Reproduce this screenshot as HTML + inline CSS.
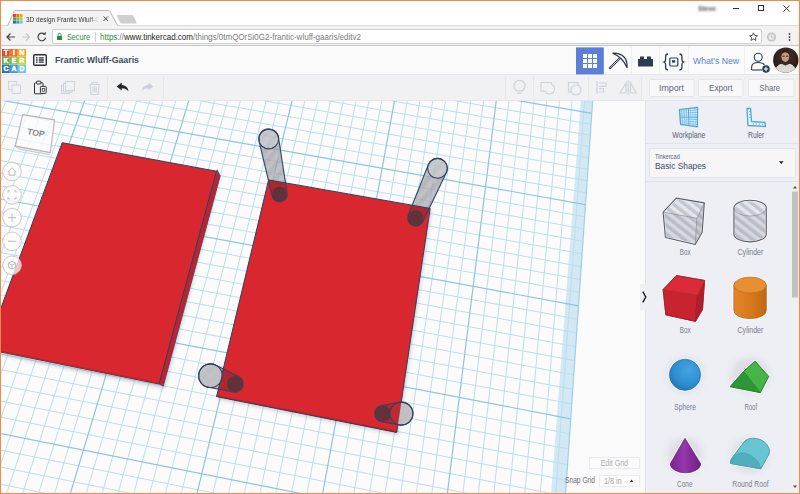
<!DOCTYPE html>
<html><head><meta charset="utf-8"><title>3D design Frantic Wluff-Gaaris</title>
<style>
*{box-sizing:border-box}
html,body{margin:0;padding:0}
body{width:800px;height:494px;position:relative;overflow:hidden;background:#fff;font-family:"Liberation Sans",sans-serif;color:#3d4a5c}
.abs{position:absolute}
#frame{position:absolute;left:0;top:0;width:800px;height:494px;border:1px solid #f28a4a;z-index:50;pointer-events:none}
/* chrome */
#titlebar{left:0;top:0;width:800px;height:27px;background:#fff}
#addr{left:0;top:26px;width:800px;height:20px;background:#f2f2f2;border-bottom:1px solid #c6c6c6}
#url{left:52px;top:29px;width:710px;height:15px;background:#fff;border:1px solid #d0d0d0;border-radius:2px}
.urltxt{font-size:9px;top:31px;white-space:nowrap;line-height:11px}
/* header */
#hdr{left:0;top:46px;width:800px;height:29px;background:#fafafb;border-bottom:1px solid #e6e7ec}
#tb{left:0;top:75px;width:800px;height:26px;background:#f1f1f4;border-bottom:1px solid #e4e5ea}
.sep{position:absolute;width:1px;background:#e6e7ec}
.btn{position:absolute;top:79px;height:18px;border:1px solid #e3e4ea;background:#f7f7fa;border-radius:1px;font-size:10.5px;line-height:16px;text-align:center;color:#5a6476}
/* sidebar */
#side{left:645px;top:101px;width:155px;height:393px;background:#eeeff4;border-left:1px solid #e0e1e8}
.lbl{position:absolute;font-size:9px;color:#6b7385;text-align:center;width:60px;line-height:10px}
</style></head><body>
<div id="titlebar" class="abs"></div>
<svg class="abs" style="left:0;top:0" width="800" height="28" viewBox="0 0 800 28">
 <path d="M1,26 L7.5,26 L14,11.5 Q14.5,10.5 16,10.5 L108,10.5 Q109.5,10.5 110,11.5 L118,26 L800,26 L800,28 L1,28 Z" fill="#f2f2f2"/>
 <path d="M1,26 L7.5,26 L14,11.5 Q14.5,10.5 16,10.5 L108,10.5 Q109.5,10.5 110,11.5 L118,26 L800,26" fill="none" stroke="#b9b9b9" stroke-width="1"/>
 <path d="M117.5,15 L132,15 Q133,15 133.5,16 L136.5,22.5 Q137,23.5 136,23.5 L121.5,23.5 Q120.5,23.5 120,22.5 L117,16 Q116.5,15 117.5,15Z" fill="#cfcfcf"/>
 <!-- favicon -->
 <g>
  <rect x="13" y="14" width="3" height="3" fill="#e8452f"/><rect x="16.3" y="14" width="3" height="3" fill="#f37321"/><rect x="19.6" y="14" width="3" height="3" fill="#f9a51a"/>
  <rect x="13" y="17.3" width="3" height="3" fill="#58a942"/><rect x="16.3" y="17.3" width="3" height="3" fill="#7dbb42"/><rect x="19.6" y="17.3" width="3" height="3" fill="#b5cf35"/>
  <rect x="13" y="20.6" width="3" height="3" fill="#1c75bc"/><rect x="16.3" y="20.6" width="3" height="3" fill="#3b9ad8"/><rect x="19.6" y="20.6" width="3" height="3" fill="#6dc3ee"/>
 </g>
 <!-- tab close -->
 <path d="M103.5,16.5 L108,21 M108,16.5 L103.5,21" stroke="#444" stroke-width="1" fill="none"/>
 <!-- window controls -->
 <path d="M733,8.5 L739,8.5" stroke="#333" stroke-width="1"/>
 <rect x="758.5" y="5.5" width="5" height="5" fill="none" stroke="#333" stroke-width="1"/>
 <path d="M783.5,5.5 L789.5,11.5 M789.5,5.5 L783.5,11.5" stroke="#333" stroke-width="1"/>
</svg>
<div id="addr" class="abs"></div>
<div id="url" class="abs"></div>
<svg class="abs" style="left:0;top:27px" width="800" height="20" viewBox="0 27 800 20">
 <!-- back -->
 <path d="M7,37 L15,37 M10.5,33.5 L7,37 L10.5,40.5" stroke="#444" stroke-width="1.2" fill="none"/>
 <path d="M22,37 L29.5,37 M26,33.5 L29.5,37 L26,40.5" stroke="#c8c8c8" stroke-width="1.2" fill="none"/>
 <path d="M44.5,34.2 A3.8,3.8 0 1 0 45.6,37.6" stroke="#444" stroke-width="1.2" fill="none"/><path d="M42.6,34.8 L45.8,34.8 L45.8,31.8 Z" fill="#444"/>
 <!-- lock -->
 <rect x="57" y="36" width="5" height="4" rx="0.5" fill="#2a8a3e"/><path d="M58,36 v-1.2 a1.5,1.5 0 0 1 3,0 v1.2" stroke="#2a8a3e" stroke-width="0.9" fill="none"/>
 <path d="M95.5,32 v10" stroke="#d0d0d0" stroke-width="1"/>
 <!-- star -->
 <path d="M753.5,32.8 l1.2,2.6 2.8,0.3 -2.1,1.9 0.6,2.8 -2.5,-1.4 -2.5,1.4 0.6,-2.8 -2.1,-1.9 2.8,-0.3z" fill="none" stroke="#444" stroke-width="0.9"/>
 <circle cx="771.5" cy="37" r="4.6" fill="#c4c4c4"/><circle cx="771.5" cy="37" r="2.9" fill="#e9e9e9"/><path d="M771.5,34.4 v2.8 h2.2" stroke="#c4c4c4" stroke-width="0.9" fill="none"/>
 <circle cx="789.5" cy="34" r="0.9" fill="#444"/><circle cx="789.5" cy="37" r="0.9" fill="#444"/><circle cx="789.5" cy="40" r="0.9" fill="#444"/>
</svg>
<!-- tinkercad header -->
<div id="hdr" class="abs"></div>
<div id="tb" class="abs"></div>
<svg class="abs" style="left:0;top:47px" width="800" height="56" viewBox="0 47 800 56" font-family="Liberation Sans, sans-serif">
 <!-- logo -->
 <g font-size="6.8" font-weight="bold" fill="#fff" text-anchor="middle" stroke="#fff" stroke-width="0.5" paint-order="stroke">
  <rect x="2" y="49" width="8" height="8" fill="#e8452f"/><rect x="10" y="49" width="8" height="8" fill="#f37321"/><rect x="18" y="49" width="8" height="8" fill="#f9a51a"/>
  <rect x="2" y="57" width="8" height="8" fill="#58a942"/><rect x="10" y="57" width="8" height="8" fill="#7dbb42"/><rect x="18" y="57" width="8" height="8" fill="#b5cf35"/>
  <rect x="2" y="65" width="8" height="8" fill="#1c75bc"/><rect x="10" y="65" width="8" height="8" fill="#3b9ad8"/><rect x="18" y="65" width="8" height="8" fill="#6dc3ee"/>
  <text x="6" y="55.4">T</text><text x="14" y="55.4">I</text><text x="22" y="55.4">N</text>
  <text x="6" y="63.4">K</text><text x="14" y="63.4">E</text><text x="22" y="63.4">R</text>
  <text x="6" y="71.4">C</text><text x="14" y="71.4">A</text><text x="22" y="71.4">D</text>
 </g>
 <!-- list icon -->
 <rect x="33.7" y="54.7" width="12.6" height="10.6" rx="1.2" fill="none" stroke="#2b2f38" stroke-width="1.4"/>
 <path d="M36,57.8 h1.6 M36,60 h1.6 M36,62.2 h1.6" stroke="#2b2f38" stroke-width="1.3"/>
 <path d="M38.8,57.8 h5 M38.8,60 h5 M38.8,62.2 h5" stroke="#2b2f38" stroke-width="1.3"/>
 <!-- right header -->
 <rect x="576" y="47.4" width="27.8" height="27" fill="#5b7fd6"/>
 <g fill="#fff"><rect x="583" y="54" width="4" height="4"/><rect x="588" y="54" width="4" height="4"/><rect x="593" y="54" width="4" height="4"/>
 <rect x="583" y="59" width="4" height="4"/><rect x="588" y="59" width="4" height="4"/><rect x="593" y="59" width="4" height="4"/>
 <rect x="583" y="64" width="4" height="4"/><rect x="588" y="64" width="4" height="4"/><rect x="593" y="64" width="4" height="4"/></g>
 <!-- pickaxe -->
 <path d="M610,68 L621,57" stroke="#2b3242" stroke-width="2.2" stroke-linecap="round"/>
 <path d="M610.3,67.7 L620.5,57.5" stroke="#fff" stroke-width="0.7"/>
 <path d="M613,53.2 Q620,53 624,57 Q627.5,60.5 627,67.5 Q624.5,62 621.5,59 Q618.5,56 613,53.2Z" fill="#fff" stroke="#2b3242" stroke-width="1.2" stroke-linejoin="round"/>
 <!-- lego -->
 <path d="M638,59 h2 v-2.5 h4 v2.5 h3 v-2.5 h4 v2.5 h2 v7.5 h-15z" fill="#2e3b52"/>
 <!-- code block -->
 <path d="M668,54 q-2.4,0 -2.4,2.4 v3 q0,2 -1.8,2.6 q1.8,0.6 1.8,2.6 v3 q0,2.4 2.4,2.4" fill="none" stroke="#2e3b52" stroke-width="1.3"/>
 <path d="M679.5,54 q2.4,0 2.4,2.4 v3 q0,2 1.8,2.6 q-1.8,0.6 -1.8,2.6 v3 q0,2.4 -2.4,2.4" fill="none" stroke="#2e3b52" stroke-width="1.3"/>
 <rect x="669.8" y="58" width="8" height="8" rx="1" fill="none" stroke="#2e3b52" stroke-width="1.2"/><rect x="672" y="60.2" width="3.2" height="2.4" fill="#2e3b52"/>
 <text x="693" y="63.6" font-size="9.2" fill="#5b7fd6" textLength="46" lengthAdjust="spacingAndGlyphs">What's New</text>
 <!-- user plus -->
 <circle cx="758.2" cy="57.2" r="4" fill="none" stroke="#2e3b52" stroke-width="1.1"/>
 <path d="M751.6,70 v-2.5 q0,-5 6.600,-5 q4.600,0 6.200,2.400" fill="none" stroke="#2e3b52" stroke-width="1.1"/><path d="M752,70 h10" stroke="#2e3b52" stroke-width="1.1"/>
 <circle cx="766" cy="69" r="3.8" fill="#2e3b52"/><path d="M763.8,69 h4.4 M766,66.8 v4.4" stroke="#fff" stroke-width="1.1"/>
 <!-- avatar -->
 <defs><clipPath id="av"><circle cx="785.8" cy="60.1" r="12.7"/></clipPath>
 <radialGradient id="avg" cx="0.5" cy="0.35" r="0.75"><stop offset="0" stop-color="#47322a"/><stop offset="0.6" stop-color="#2a1f1b"/><stop offset="1" stop-color="#17110f"/></radialGradient></defs>
 <g clip-path="url(#av)"><rect x="772" y="46" width="28" height="28" fill="url(#avg)"/>
  <path d="M774,76 q0.5,-10.5 7.5,-12.2 l4,1.6 l4,-1.6 q7,1.700 7.500,12.2z" fill="#dcd8d4"/>
  <ellipse cx="785.3" cy="56.600" rx="3.900" ry="5.300" fill="#c79a84"/>
  <path d="M781,55 q0.6,-5.600 4.300,-5.600 q3.700,0 4.300,5.600 q-1.800,-2.800 -4.300,-2.800 q-2.500,0 -4.300,2.800z" fill="#2e211b"/>
  <path d="M782.300,56.200 h2.400 M786,56.200 h2.400" stroke="#2e211b" stroke-width="0.900"/>
  <path d="M783.300,63.200 l2.200,0.900 l2.200,-0.900 v1.800 l-2.200,-0.900 l-2.200,0.900z" fill="#4a4a50"/>
 </g>
 <path d="M631.5,47 v28 M659.5,47 v28 M688.5,47 v28 M744.5,47 v28" stroke="#eceef3" stroke-width="1"/>
 <!-- toolbar icons left -->
 <g fill="none" stroke="#d0d4de" stroke-width="1.1">
  <rect x="8.5" y="81.5" width="8" height="8"/><rect x="12" y="85" width="8.5" height="8.5" fill="#f1f1f4"/>
  <rect x="61.5" y="85.5" width="8" height="8" /><rect x="63.5" y="83.5" width="8.5" height="8.5" fill="#f1f1f4"/><rect x="65.5" y="81.5" width="9" height="9" fill="#f1f1f4"/>
  <path d="M89,84.5 h11 M92,84.5 v-2 h5 v2 M90,84.5 l0.8,10 h7.4 l0.8,-10 M93,86.5 v6 M94.6,86.5 v6 M96.2,86.5 v6"/>
 </g>
 <g fill="none" stroke="#2b2f38" stroke-width="1">
  <rect x="34.5" y="82.8" width="8.5" height="11" rx="0.8"/><rect x="36.6" y="81.2" width="4.2" height="2.8" rx="0.6" fill="#f1f1f4"/><rect x="40.4" y="86.4" width="5.8" height="7" rx="0.8" fill="#f1f1f4"/><rect x="42.2" y="88.6" width="2.2" height="2.6" stroke-width="0.7"/>
 </g>
 <path d="M107.5,76 v25 M163.5,76 v25 M505.5,76 v25 M533.5,76 v26 M588.5,76 v26 M641.5,76 v26" stroke="#e6e7ec" stroke-width="1"/>
 <!-- undo / redo -->
 <path d="M116.6,86.5 L121.8,82.6 L121.8,85 Q127.5,85.2 128.6,91.2 Q126,88.2 121.8,88.2 L121.8,90.4 Z" fill="#23272f"/>
 <path d="M153.6,86.5 L148.4,82.6 L148.4,85 Q142.7,85.2 141.6,91.2 Q144.2,88.2 148.4,88.2 L148.4,90.4 Z" fill="#ccd1dc"/>
 <!-- toolbar icons right -->
 <g fill="none" stroke="#cfd3dd" stroke-width="1.2">
  <path d="M516.7,91 q-2.8,-2.4 -2.8,-5 a5.6,5.6 0 0 1 11.2,0 q0,2.6 -2.8,5 z M517.2,93.2 h4.6"/>
  <path d="M541,82.5 H551.5 V84.3 A5,5 0 1 1 545.2,91.2 H541 Z"/>
  <rect x="568.5" y="82.5" width="9.5" height="9.5"/><circle cx="576" cy="90" r="5" fill="#f1f1f4"/>
  <path d="M597,81 v13 M599,83 h7 v3.4 h-7 M599,88.6 h4.6 v3.4 h-4.6"/>
  <path d="M628.2,80.5 v14.5 M626,83 v10 h-6z M630.4,83 v10 h6z"/>
 </g>
</svg>
<svg class="abs" style="left:0;top:0" width="800" height="102" viewBox="0 0 800 102" font-family="Liberation Sans, sans-serif">
 <defs><linearGradient id="tf" x1="0" x2="1"><stop offset="0.86" stop-color="#fff"/><stop offset="1" stop-color="#000"/></linearGradient>
 <mask id="tm"><rect x="24" y="10" width="75" height="16" fill="url(#tf)"/></mask>
 <filter id="bl"><feGaussianBlur stdDeviation="0.8"/></filter></defs>
 <g mask="url(#tm)"><text x="26" y="21.6" font-size="7.6" fill="#333" textLength="78" lengthAdjust="spacingAndGlyphs">3D design Frantic Wluff-Ga</text></g>
 <text x="698" y="11" font-size="7.4" font-weight="bold" fill="#555" textLength="18" lengthAdjust="spacingAndGlyphs" filter="url(#bl)">Steve</text>
 <text x="67" y="40" font-size="8.2" fill="#2a8a3e" textLength="23" lengthAdjust="spacingAndGlyphs">Secure</text>
 <text x="100" y="40" font-size="8.2" fill="#7a7a7a" textLength="261" lengthAdjust="spacingAndGlyphs"><tspan fill="#2a8a3e">https</tspan>://<tspan fill="#222">www.tinkercad.com</tspan>/things/0tmQOrSi0G2-frantic-wluff-gaaris/editv2</text>
 <text x="55" y="63.2" font-size="9.6" font-weight="bold" fill="#414d61" textLength="84" lengthAdjust="spacingAndGlyphs">Frantic Wluff-Gaaris</text>
 <g fill="#f8f8fa" stroke="#e4e5eb" stroke-width="1">
  <rect x="649.5" y="79.5" width="44.5" height="17" rx="1"/><rect x="698.5" y="79.5" width="44.5" height="17" rx="1"/><rect x="748.5" y="79.5" width="45.5" height="17" rx="1"/>
 </g>
 <g font-size="8.8" fill="#5d6778">
  <text x="659" y="91" textLength="25" lengthAdjust="spacingAndGlyphs">Import</text>
  <text x="709" y="91" textLength="23.4" lengthAdjust="spacingAndGlyphs">Export</text>
  <text x="759.6" y="91" textLength="20.4" lengthAdjust="spacingAndGlyphs">Share</text>
 </g>
</svg>

<svg id="cv" width="800" height="494" viewBox="0 0 800 494" style="position:absolute;left:0;top:0">
<defs><clipPath id="cc"><rect x="1" y="101" width="644" height="392"/></clipPath><pattern id="st" width="9" height="9" patternUnits="userSpaceOnUse" patternTransform="rotate(40)"><rect width="9" height="9" fill="#a9abb0"/><rect width="4.5" height="9" fill="#9b9da3"/></pattern></defs>
<g clip-path="url(#cc)">
<rect x="0" y="100" width="646" height="394" fill="#fafafa"/>
<polygon points="-58.0,-40.1 594.7,71.1 546.6,768.5 -355.1,575.8" fill="#fbfbfc"/>
<polygon points="583.2,69.2 594.7,71.1 546.6,768.5 530.6,765.0" fill="#d2e8f4"/>
<path d="M-46.7,-38.2 L-339.8,579.1 M-35.4,-36.2 L-324.4,582.3 M-24.1,-34.3 L-309.0,585.6 M-12.8,-32.4 L-293.6,588.9 M-1.5,-30.5 L-278.2,592.2 M9.9,-28.5 L-262.7,595.5 M21.3,-26.6 L-247.2,598.8 M44.0,-22.7 L-216.1,605.5 M55.5,-20.8 L-200.5,608.8 M66.9,-18.8 L-184.8,612.2 M78.3,-16.9 L-169.2,615.5 M89.8,-14.9 L-153.5,618.9 M101.3,-12.9 L-137.7,622.2 M112.8,-11.0 L-122.0,625.6 M135.8,-7.1 L-90.4,632.4 M147.4,-5.1 L-74.5,635.7 M159.0,-3.1 L-58.6,639.1 M170.5,-1.1 L-42.7,642.5 M182.1,0.8 L-26.7,645.9 M193.8,2.8 L-10.8,649.4 M205.4,4.8 L5.3,652.8 M228.7,8.8 L37.4,659.7 M240.4,10.8 L53.5,663.1 M252.1,12.8 L69.7,666.5 M263.8,14.7 L85.8,670.0 M275.6,16.7 L102.1,673.5 M287.3,18.8 L118.3,676.9 M299.1,20.8 L134.6,680.4 M322.7,24.8 L167.3,687.4 M334.5,26.8 L183.6,690.9 M346.3,28.8 L200.1,694.4 M358.2,30.8 L216.5,697.9 M370.1,32.9 L233.0,701.4 M382.0,34.9 L249.5,705.0 M393.9,36.9 L266.1,708.5 M417.7,41.0 L299.3,715.6 M429.7,43.0 L315.9,719.2 M441.7,45.1 L332.6,722.7 M453.7,47.1 L349.3,726.3 M465.7,49.2 L366.1,729.9 M477.7,51.2 L382.9,733.5 M489.8,53.3 L399.7,737.1 M514.0,57.4 L433.5,744.3 M526.1,59.4 L450.4,747.9 M538.2,61.5 L467.4,751.5 M550.3,63.6 L484.4,755.2 M562.5,65.6 L501.4,758.8 M574.7,67.7 L518.5,762.5 M586.9,69.8 L535.6,766.1 M-58.0,-40.1 L594.7,71.1 M-62.5,-30.8 L594.0,81.5 M-67.0,-21.4 L593.2,92.0 M-71.6,-11.8 L592.5,102.6 M-81.0,7.6 L591.0,124.3 M-85.7,17.5 L590.2,135.4 M-90.6,27.5 L589.5,146.5 M-95.4,37.6 L588.7,157.8 M-100.4,47.8 L587.9,169.3 M-105.4,58.2 L587.1,180.9 M-110.5,68.7 L586.3,192.7 M-120.8,90.1 L584.6,216.7 M-126.0,101.0 L583.8,228.9 M-131.4,112.0 L582.9,241.3 M-136.8,123.2 L582.1,253.8 M-142.2,134.5 L581.2,266.6 M-147.7,146.0 L580.3,279.5 M-153.4,157.6 L579.4,292.5 M-164.8,181.3 L577.6,319.2 M-170.6,193.4 L576.6,332.9 M-176.5,205.7 L575.7,346.7 M-182.5,218.1 L574.7,360.7 M-188.6,230.6 L573.7,374.9 M-194.7,243.4 L572.7,389.3 M-201.0,256.3 L571.7,403.9 M-213.7,282.7 L569.7,433.8 M-220.2,296.2 L568.6,449.1 M-226.8,309.9 L567.6,464.6 M-233.5,323.7 L566.5,480.3 M-240.3,337.8 L565.4,496.3 M-247.2,352.0 L564.2,512.5 M-254.1,366.5 L563.1,529.0 M-268.4,396.1 L560.8,562.7 M-275.7,411.2 L559.6,579.9 M-283.1,426.6 L558.4,597.4 M-290.6,442.1 L557.2,615.2 M-298.2,458.0 L555.9,633.3 M-306.0,474.0 L554.7,651.7 M-313.9,490.3 L553.4,670.3 M-330.0,523.7 L550.7,708.6 M-338.2,540.8 L549.4,728.2 M-346.6,558.1 L548.0,748.2 M-355.1,575.8 L546.6,768.5" stroke="#bcdeed" stroke-width="1" fill="none"/>
<path d="M-58.0,-40.1 L-355.1,575.8 M32.6,-24.6 L-231.6,602.2 M124.3,-9.0 L-106.2,629.0 M217.0,6.8 L21.3,656.2 M310.9,22.8 L150.9,683.9 M405.8,38.9 L282.7,712.1 M501.9,55.3 L416.6,740.7 M-76.3,-2.2 L591.8,113.4 M-115.6,79.3 L585.5,204.6 M-159.0,169.4 L578.5,305.8 M-207.3,269.4 L570.7,418.8 M-261.2,381.2 L562.0,545.7 M-321.9,506.9 L552.1,689.3" stroke="#8ec4de" stroke-width="1.2" fill="none"/>
<path d="M594.7,71.1 L546.6,768.5" stroke="#9fcfe6" stroke-width="1.2" fill="none"/>
<clipPath id="rb"><polygon points="268.6,179.9 430.2,208.4 396.7,432.4 216.6,396.6"/></clipPath>
<filter id="shb" x="-10%" y="-10%" width="120%" height="120%"><feGaussianBlur stdDeviation="1.6"/></filter>
<g filter="url(#shb)" fill="#3a4a5a" fill-opacity="0.22"><polygon points="64,145 221,176 165,389 -2,355 -2,318"/><polygon points="270,182 432,210 398.5,435.5 217.5,399.5"/></g>
<g stroke-linejoin="round">
<polygon points="217.1,169.8 220.2,175.9 163.3,386 158.9,383.9" fill="#c4202b" stroke="#3b4a72" stroke-width="0.8"/>
<polygon points="62.2,142.7 216.4,171.2 159,384 -2,351.5 -2,316" fill="#d92730" stroke="#2d3f5e" stroke-width="1"/>
<polygon points="216.6,396.6 396.7,432.4 396.9,430.6 216.9,394.8" fill="#c4202b" stroke="none"/>
<polygon points="268.6,179.9 430.2,208.4 396.7,432.4 216.6,396.6" fill="#d92730" stroke="none"/>
<polygon points="216.9,395.2 396.9,431 396.7,432.4 216.6,396.6" fill="#c5212c" stroke="none"/>
<polygon points="-2,350 159.2,382.6 159,384 -2,351.5" fill="#c5212c" stroke="none"/>
</g>
<clipPath id="ty0"><path d="M259.1,141.3 L272.1,195.7 A7.6,7.6 0 0 0 287.0,192.7 L278.5,137.5 A9.9,9.9 0 1 0 259.1,141.3 Z"/></clipPath>
<path d="M259.1,141.3 L272.1,195.7 A7.6,7.6 0 0 0 287.0,192.7 L278.5,137.5 A9.9,9.9 0 1 0 259.1,141.3 Z" fill="url(#st)" fill-opacity="0.72" stroke="none"/>
<g clip-path="url(#rb)"><path d="M259.1,141.3 L272.1,195.7 A7.6,7.6 0 0 0 287.0,192.7 L278.5,137.5 A9.9,9.9 0 1 0 259.1,141.3 Z" fill="#ad2730" stroke="none"/>
<circle cx="279.5" cy="193.9" r="7.3" fill="#613238" stroke="none" clip-path="url(#ty0)"/></g>
<clipPath id="ty1"><path d="M428.3,164.6 L408.3,215.0 A8.0,8.0 0 0 0 422.9,221.5 L446.4,172.6 A9.9,9.9 0 1 0 428.3,164.6 Z"/></clipPath>
<path d="M428.3,164.6 L408.3,215.0 A8.0,8.0 0 0 0 422.9,221.5 L446.4,172.6 A9.9,9.9 0 1 0 428.3,164.6 Z" fill="url(#st)" fill-opacity="0.72" stroke="none"/>
<g clip-path="url(#rb)"><path d="M428.3,164.6 L408.3,215.0 A8.0,8.0 0 0 0 422.9,221.5 L446.4,172.6 A9.9,9.9 0 1 0 428.3,164.6 Z" fill="#ad2730" stroke="none"/>
<circle cx="415.7" cy="218.0" r="7.7" fill="#613238" stroke="none" clip-path="url(#ty1)"/></g>
<clipPath id="ty2"><path d="M208.3,387.3 L233.4,392.0 A8.2,8.2 0 0 0 238.6,376.6 L215.8,365.2 A11.8,11.8 0 1 0 208.3,387.3 Z"/></clipPath>
<path d="M208.3,387.3 L233.4,392.0 A8.2,8.2 0 0 0 238.6,376.6 L215.8,365.2 A11.8,11.8 0 1 0 208.3,387.3 Z" fill="url(#st)" fill-opacity="0.72" stroke="none"/>
<g clip-path="url(#rb)"><path d="M208.3,387.3 L233.4,392.0 A8.2,8.2 0 0 0 238.6,376.6 L215.8,365.2 A11.8,11.8 0 1 0 208.3,387.3 Z" fill="#ad2730" stroke="none"/>
<circle cx="234.9" cy="383.9" r="7.9" fill="#613238" stroke="none" clip-path="url(#ty2)"/></g>
<clipPath id="ty3"><path d="M399.3,402.3 L381.6,405.5 A8.2,8.2 0 0 0 381.6,421.7 L399.3,424.9 A11.5,11.5 0 1 0 399.3,402.3 Z"/></clipPath>
<path d="M399.3,402.3 L381.6,405.5 A8.2,8.2 0 0 0 381.6,421.7 L399.3,424.9 A11.5,11.5 0 1 0 399.3,402.3 Z" fill="url(#st)" fill-opacity="0.72" stroke="none"/>
<g clip-path="url(#rb)"><path d="M399.3,402.3 L381.6,405.5 A8.2,8.2 0 0 0 381.6,421.7 L399.3,424.9 A11.5,11.5 0 1 0 399.3,402.3 Z" fill="#ad2730" stroke="none"/>
<circle cx="383.1" cy="413.6" r="7.9" fill="#613238" stroke="none" clip-path="url(#ty3)"/></g>
<polygon points="268.6,179.9 430.2,208.4 396.7,432.4 216.6,396.6" fill="none" stroke="#2d3f5e" stroke-width="1" stroke-linejoin="round"/>
<ellipse cx="268.7" cy="139.0" rx="9.9" ry="9.9" fill="#dcdde0" fill-opacity="0.35" stroke="none"/>
<g clip-path="url(#rb)"><ellipse cx="268.7" cy="139.0" rx="9.9" ry="9.9" fill="#bb2a33" stroke="none"/></g>
<path d="M259.1,141.3 L272.1,195.7 A7.6,7.6 0 0 0 287.0,192.7 L278.5,137.5 A9.9,9.9 0 1 0 259.1,141.3 Z" fill="none" stroke="#2f4261" stroke-width="1.1"/>
<ellipse cx="268.7" cy="139.0" rx="9.9" ry="9.9" fill="none" stroke="#2f4261" stroke-width="1.1"/>
<ellipse cx="437.5" cy="168.3" rx="9.9" ry="9.9" fill="#dcdde0" fill-opacity="0.35" stroke="none"/>
<g clip-path="url(#rb)"><ellipse cx="437.5" cy="168.3" rx="9.9" ry="9.9" fill="#bb2a33" stroke="none"/></g>
<path d="M428.3,164.6 L408.3,215.0 A8.0,8.0 0 0 0 422.9,221.5 L446.4,172.6 A9.9,9.9 0 1 0 428.3,164.6 Z" fill="none" stroke="#2f4261" stroke-width="1.1"/>
<ellipse cx="437.5" cy="168.3" rx="9.9" ry="9.9" fill="none" stroke="#2f4261" stroke-width="1.1"/>
<ellipse cx="210.5" cy="375.7" rx="11.8" ry="11.8" fill="#c2c2c5" fill-opacity="0.8" stroke="none"/>
<g clip-path="url(#rb)"><ellipse cx="210.5" cy="375.7" rx="11.8" ry="11.8" fill="#bb2a33" stroke="none"/></g>
<path d="M208.3,387.3 L233.4,392.0 A8.2,8.2 0 0 0 238.6,376.6 L215.8,365.2 A11.8,11.8 0 1 0 208.3,387.3 Z" fill="none" stroke="#2f4261" stroke-width="1.1"/>
<ellipse cx="210.5" cy="375.7" rx="11.8" ry="11.8" fill="none" stroke="#2f4261" stroke-width="1.1"/>
<ellipse cx="401.4" cy="413.6" rx="11.5" ry="11.5" fill="#c2c2c5" fill-opacity="0.8" stroke="none"/>
<g clip-path="url(#rb)"><ellipse cx="401.4" cy="413.6" rx="11.5" ry="11.5" fill="#bb2a33" stroke="none"/></g>
<path d="M399.3,402.3 L381.6,405.5 A8.2,8.2 0 0 0 381.6,421.7 L399.3,424.9 A11.5,11.5 0 1 0 399.3,402.3 Z" fill="none" stroke="#2f4261" stroke-width="1.1"/>
<ellipse cx="401.4" cy="413.6" rx="11.5" ry="11.5" fill="none" stroke="#2f4261" stroke-width="1.1"/>
</g>
</svg>
<svg class="abs" style="left:0;top:102px" width="646" height="392" viewBox="0 102 646 392" font-family="Liberation Sans, sans-serif">
 <!-- view cube -->
 <polygon points="15.3,146.1 18.4,149 48.9,154.6 50.3,152.5" fill="#ececec" stroke="#bdbdbd" stroke-width="0.8"/>
 <polygon points="22.7,114.6 54.6,119.9 50.3,152.5 15.3,146.1" fill="#fcfcfc" fill-opacity="0.72" stroke="#b4b4b4" stroke-width="1.1" stroke-linejoin="round"/>
 <text x="0" y="3" font-size="8.6" font-weight="bold" fill="#8a8a8a" text-anchor="middle" transform="translate(36,132.8) rotate(9) skewX(-4)">TOP</text>
 <!-- nav buttons -->
 <g fill="#fcfcfc" fill-opacity="0.75" stroke="#c4c4c4" stroke-width="0.9">
  <circle cx="12" cy="171.5" r="9.3"/><circle cx="12" cy="194.8" r="9.3"/><circle cx="12" cy="217.6" r="9.3"/><circle cx="12" cy="241.3" r="9.3"/><circle cx="12" cy="265.2" r="9.3"/>
 </g>
 <g fill="none" stroke="#b5b5b5" stroke-width="0.9">
  <path d="M7.8,171.8 L12,167.8 L16.2,171.8 M9,171 v4.2 h6 v-4.2"/>
  <path d="M8,192.8 v-2 h2 M14,190.8 h2 v2 M16,196.8 v2 h-2 M10,198.8 h-2 v-2"/>
  <path d="M8,217.6 h8 M12,213.6 v8"/>
  <path d="M8,241.3 h8"/>
  <path d="M12,261.2 l3.6,2 v4 l-3.6,2 l-3.6,-2 v-4z M8.4,263.2 l3.6,2 l3.6,-2 M12,265.2 v4"/>
 </g>
 <!-- grid controls -->
 <rect x="589.5" y="457.5" width="50" height="11" fill="#fbfbfb" stroke="#eaeaee" stroke-width="1"/>
 <text x="600.7" y="465.6" font-size="8.4" fill="#a9abb3" textLength="27.3" lengthAdjust="spacingAndGlyphs">Edit Grid</text>
 <text x="565" y="483.2" font-size="8.4" fill="#6b6e78" textLength="30" lengthAdjust="spacingAndGlyphs">Snap Grid</text>
 <rect x="599.5" y="475.5" width="40" height="11" fill="#fdfdfd" stroke="#eaeaee" stroke-width="1"/>
 <text x="604" y="483.8" font-size="8.4" fill="#a0a2aa" textLength="17.7" lengthAdjust="spacingAndGlyphs">1/8 in</text>
 <path d="M629.8,482 l1.8,-2.6 l1.8,2.6z" fill="#333"/>
</svg>

<div id="side" class="abs"></div>
<svg class="abs" style="left:640px;top:102px" width="160" height="392" viewBox="640 102 160 392" font-family="Liberation Sans, sans-serif">
 <defs>
  <pattern id="hs" width="7" height="7" patternUnits="userSpaceOnUse" patternTransform="rotate(-52)"><rect width="7" height="7" fill="#e4e6eb"/><rect width="3.5" height="7" fill="#c2c6cf"/></pattern>
  <linearGradient id="og" x1="0" x2="1"><stop offset="0" stop-color="#e38527"/><stop offset="0.6" stop-color="#d5761c"/><stop offset="1" stop-color="#c06714"/></linearGradient>
  <radialGradient id="sg" cx="0.6" cy="0.35" r="0.75"><stop offset="0" stop-color="#43a4e2"/><stop offset="0.6" stop-color="#2f8ed0"/><stop offset="1" stop-color="#246faa"/></radialGradient>
  <linearGradient id="pg" x1="0" x2="1"><stop offset="0" stop-color="#7a2590"/><stop offset="0.45" stop-color="#9537ab"/><stop offset="1" stop-color="#6c1f80"/></linearGradient>
  <radialGradient id="halo" cx="0.5" cy="0.5" r="0.5"><stop offset="0" stop-color="#d2d3da" stop-opacity="1"/><stop offset="0.55" stop-color="#dcdde3" stop-opacity="0.8"/><stop offset="1" stop-color="#eeeff4" stop-opacity="0"/></radialGradient>
 </defs>
 <!-- workplane icon -->
 <g fill="none" stroke="#4aa5d8">
  <path d="M679.4,109.6 L697.5,107.4 L697.3,126.9 L680.6,124.4 Z" stroke-width="1.3" fill="#f4f9fd" stroke-linejoin="round"/>
  <path d="M681.7,109.3 L682.7,124.7 M679.5,111.4 L697.5,109.8 M683.9,109.0 L684.8,125.0 M679.7,113.3 L697.5,112.3 M686.2,108.8 L686.9,125.3 M679.9,115.2 L697.4,114.7 M690.7,108.2 L691.0,126.0 M680.1,118.8 L697.4,119.6 M693.0,108.0 L693.1,126.3 M680.3,120.7 L697.3,122.0 M695.2,107.7 L695.2,126.6 M680.5,122.6 L697.3,124.5" stroke-width="0.55"/>
  <path d="M688.5,108.5 L689.0,125.7 M680.0,117.0 L697.4,117.2" stroke-width="1"/>
 </g>
 <text x="672.3" y="138.4" font-size="8.6" fill="#566074" textLength="33" lengthAdjust="spacingAndGlyphs">Workplane</text>
 <!-- ruler icon -->
 <path d="M747,108.5 L750.5,108.5 L751.5,121.5 L765,122.5 L765.5,126.5 L748,125.5 Z" fill="#eaf4fb" stroke="#4aa5d8" stroke-width="1.3" stroke-linejoin="round"/>
 <path d="M749,111.5 h1.5 M749.2,114.5 h1.5 M749.4,117.5 h1.5 M753.5,123 v1.5 M756.5,123.2 v1.5 M759.5,123.4 v1.5 M762.5,123.6 v1.5" stroke="#4aa5d8" stroke-width="0.8"/>
 <text x="748" y="138.4" font-size="8.6" fill="#566074" textLength="16.4" lengthAdjust="spacingAndGlyphs">Ruler</text>
 <path d="M646,143.5 h154" stroke="#e2e3ea" stroke-width="1"/>
 <!-- dropdown -->
 <rect x="649.5" y="148.5" width="146" height="29" rx="1.5" fill="#f6f6f9" stroke="#e3e4ea" stroke-width="1"/>
 <text x="655" y="158.6" font-size="7.2" fill="#5c6576" textLength="24.8" lengthAdjust="spacingAndGlyphs">Tinkercad</text>
 <text x="655" y="169.4" font-size="9.6" fill="#3f4b5f" textLength="51" lengthAdjust="spacingAndGlyphs">Basic Shapes</text>
 <path d="M779,161.3 h4.6 l-2.3,2.8z" fill="#222"/>
 <path d="M646,181.5 h154" stroke="#e2e3ea" stroke-width="1"/>
 <!-- scrollbar -->
 <rect x="791" y="182" width="8" height="311" fill="#f0f0f3"/>
 <rect x="792" y="191.5" width="6" height="106" fill="#c1c1c1"/>
 <path d="M793,188.5 l2,-2.5 l2,2.5z" fill="#505050"/><path d="M793,485.5 l2,2.5 l2,-2.5z" fill="#505050"/>
 <!-- collapse handle -->
 <rect x="640" y="284" width="7.5" height="26" fill="#eeeff4"/>
 <path d="M642.8,291.6 L645.8,297 L642.8,302.4" fill="none" stroke="#111" stroke-width="1.3"/>
 <!-- halos -->
 <ellipse cx="685" cy="375" rx="26" ry="26" fill="url(#halo)"/><ellipse cx="750" cy="375" rx="28" ry="26" fill="url(#halo)"/>
 <ellipse cx="685" cy="455" rx="26" ry="26" fill="url(#halo)"/><ellipse cx="750" cy="455" rx="28" ry="26" fill="url(#halo)"/>
 <!-- hole box -->
 <g stroke-linejoin="round">
  <polygon points="676.3,198.1 704.3,202.9 702.2,232.3 695.2,244.5 665.4,237.5 663.1,212.1" fill="url(#hs)" stroke="#fff" stroke-width="2.4" stroke-opacity="0.7"/>
  <polygon points="696.9,218.3 704.3,202.9 702.2,232.3 695.2,244.5" fill="#6a7080" fill-opacity="0.22"/>
  <polygon points="663.1,212.1 696.9,218.3 695.2,244.5 665.4,237.5" fill="#6a7080" fill-opacity="0.1"/>
  <path d="M663.1,212.1 L696.9,218.3 L704.3,202.9 M696.9,218.3 L695.2,244.5" fill="none" stroke-width="0.7" stroke="#8a8f98"/>
  <polygon points="676.3,198.1 704.3,202.9 702.2,232.3 695.2,244.5 665.4,237.5 663.1,212.1" fill="none" stroke="#5b6068" stroke-width="1.1"/>
 </g>
 <!-- hole cylinder -->
 <g>
  <path d="M733.9,208.1 A16.2,7.9 0 0 1 766.3,208.1 L766.3,234 A16.2,7.9 0 0 1 733.9,234 Z" fill="url(#hs)" stroke="#fff" stroke-width="2.4" stroke-opacity="0.7"/>
  <path d="M733.9,208.1 A16.2,7.9 0 0 0 766.3,208.1 L766.3,234 A16.2,7.9 0 0 1 733.9,234 Z" fill="#6a7080" fill-opacity="0.12"/>
  <path d="M733.9,208.1 A16.2,7.9 0 0 0 766.3,208.1" fill="none" stroke-width="0.7" stroke="#8a8f98"/>
  <path d="M733.9,208.1 A16.2,7.9 0 0 1 766.3,208.1 L766.3,234 A16.2,7.9 0 0 1 733.9,234 Z" fill="none" stroke="#5b6068" stroke-width="1.1"/>
 </g>
 <!-- red box -->
 <polygon points="676.3,275.5 704.6,280.4 702.5,309.6 695.5,321.4 665.8,314.9 663.1,289.5" fill="none" stroke="#fff" stroke-opacity="0.75" stroke-width="2.6" stroke-linejoin="round"/>
 <g stroke-linejoin="round" stroke-width="0.7">
 <polygon points="663.1,289.5 697.3,295.1 695.5,321.4 665.8,314.9" fill="#c8242f" stroke="#ae1e2a"/>
 <polygon points="697.3,295.1 704.6,280.4 702.5,309.6 695.5,321.4" fill="#b21d2a" stroke="#9e1925"/>
 <polygon points="676.3,275.5 704.6,280.4 697.3,295.1 663.1,289.5" fill="#d92b39" stroke="#be2431"/>
 <polygon points="676.3,275.5 704.6,280.4 702.5,309.6 695.5,321.4 665.8,314.9 663.1,289.5" fill="none" stroke="#96202a" stroke-width="0.8"/>
 </g>
 <!-- orange cylinder -->
 <path d="M733.9,285.1 A16.2,8 0 0 1 766.3,285.1 L766.3,310.6 A16.2,8 0 0 1 733.9,310.6 Z" fill="none" stroke="#fff" stroke-opacity="0.75" stroke-width="2.6"/>
 <path d="M733.9,285.1 L733.9,310.6 A16.2,8 0 0 0 766.3,310.6 L766.3,285.1 Z" fill="url(#og)" stroke="#b5651a" stroke-width="0.8"/>
 <ellipse cx="750.1" cy="285.1" rx="16.2" ry="8" fill="#e98f33" stroke="#bf6c1c" stroke-width="0.7"/>
 <!-- sphere -->
 <circle cx="685" cy="374.8" r="16.6" fill="#fff" fill-opacity="0.75"/><circle cx="685" cy="374.8" r="15.6" fill="url(#sg)" stroke="#2273ae" stroke-width="0.7"/>
 <!-- roof -->
 <polygon points="730.2,386.7 743.5,371.5 755,361.1 768.7,376.5 760.3,392.6" fill="none" stroke="#fff" stroke-opacity="0.75" stroke-width="2.6" stroke-linejoin="round"/>
 <g stroke-linejoin="round" stroke-width="0.7">
 <polygon points="743.5,371.5 755,361.1 768.7,376.5 760.3,392.6" fill="#46b548" stroke="#2f8f36"/>
 <polygon points="730.2,386.7 743.5,371.5 760.3,392.6" fill="#2f9539" stroke="#27802f"/>
 <polygon points="730.2,386.7 743.5,371.5 755,361.1 768.7,376.5 760.3,392.6" fill="none" stroke="#2a7c31" stroke-width="0.8"/>
 </g>
 <!-- cone -->
 <path d="M685,438.2 L670.1,464 A15.4,9.6 0 0 0 700.8,464 Z" fill="none" stroke="#fff" stroke-opacity="0.75" stroke-width="2.6" stroke-linejoin="round"/><path d="M685,438.2 L670.1,464 A15.4,9.6 0 0 0 700.8,464 Z" fill="url(#pg)" stroke="#5e1b70" stroke-width="0.7" stroke-linejoin="round"/>
 <!-- round roof -->
 <path d="M730.7,463.5 Q729.6,461.5 731.2,459 L745,440.6 Q752,436.2 760.9,439.7 Q768.6,443.5 769.6,450.9 Q769.6,453 768.6,455 L760.9,468.9 Z" fill="none" stroke="#fff" stroke-opacity="0.75" stroke-width="2.6" stroke-linejoin="round"/>
 <g stroke-linejoin="round">
 <path d="M730.7,463.5 Q729.6,461.5 731.2,459 L745,440.6 Q752,436.2 760.9,439.7 Q768.6,443.5 769.6,450.9 Q769.6,453 768.6,455 L760.9,468.9 Z" fill="#68c4d3" stroke="#2f8fa2" stroke-width="0.8"/>
 <path d="M730.7,463.5 Q730.6,458.8 734.5,455.6 Q739,452.2 744.5,453 Q752,454.5 757.5,461 Q760,464.5 760.9,468.9 Z" fill="#50aebf" stroke="#3f9bad" stroke-width="0.5"/>
 </g>
 <!-- labels -->
 <g font-size="8.6" fill="#757e8e">
  <text x="679.7" y="255.4" textLength="10.9" lengthAdjust="spacingAndGlyphs">Box</text><text x="737.5" y="255.4" textLength="25.9" lengthAdjust="spacingAndGlyphs">Cylinder</text>
  <text x="679.7" y="332.8" textLength="10.9" lengthAdjust="spacingAndGlyphs">Box</text><text x="737.5" y="332.8" textLength="25.9" lengthAdjust="spacingAndGlyphs">Cylinder</text>
  <text x="674.2" y="409.8" textLength="21.7" lengthAdjust="spacingAndGlyphs">Sphere</text><text x="744.5" y="409.8" textLength="12.6" lengthAdjust="spacingAndGlyphs">Roof</text>
  <text x="677.1" y="486.6" textLength="15.4" lengthAdjust="spacingAndGlyphs">Cone</text><text x="732.3" y="486.6" textLength="36.4" lengthAdjust="spacingAndGlyphs">Round Roof</text>
 </g>
</svg>

<div id="frame"></div>
</body></html>
